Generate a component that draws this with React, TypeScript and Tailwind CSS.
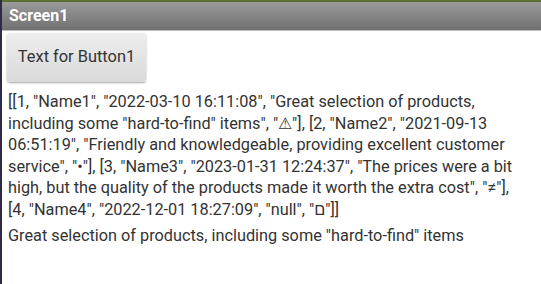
const listText =
  '[[1, "Name1", "2022-03-10 16:11:08", "Great selection of products, including some "hard-to-find" items", "⚠"], [2, "Name2", "2021-09-13 06:51:19", "Friendly and knowledgeable, providing excellent customer service", "•"], [3, "Name3", "2023-01-31 12:24:37", "The prices were a bit high, but the quality of the products made it worth the extra cost", "≠"], [4,\u00a0"Name4", "2022-12-01 18:27:09", "null", "ם"]]';

export default function App() {
  return (
    <div
      className="w-[541px] h-[284px] flex flex-col bg-white border-l-2 border-[#2e2a48] overflow-hidden"
      style={{ fontFamily: "Roboto, 'Liberation Sans', sans-serif" }}
    >
      {/* title bar */}
      <div className="h-[31px] shrink-0 flex items-center px-[7px] border-t-2 border-[#5c7030] bg-gradient-to-b from-[#9a9a9a] to-[#717171] border-b border-b-[#bdbdbd]">
        <span className="text-white font-bold text-[16px]">Screen1</span>
      </div>

      <div className="flex flex-col pl-[4px] pr-[4px]">
        <div className="pt-[2px]">
          <button className="w-[139px] h-[49px] rounded-[3px] bg-gradient-to-b from-[#eeeeee] to-[#d9d9d9] text-[#333333] text-[16.4px] shadow-[0_1px_2px_rgba(0,0,0,0.35)] ml-[1px]">
            Text for Button1
          </button>
        </div>

        <p className="mt-[9px] pl-[2px] pr-[2px] text-[16.3px] leading-[21.5px] text-[#333333]">
          {listText}
        </p>
        <p className="mt-[5px] pl-[2px] text-[16.3px] leading-[21.5px] text-[#333333]">
          Great selection of products, including some "hard-to-find" items
        </p>
      </div>
    </div>
  );
}
